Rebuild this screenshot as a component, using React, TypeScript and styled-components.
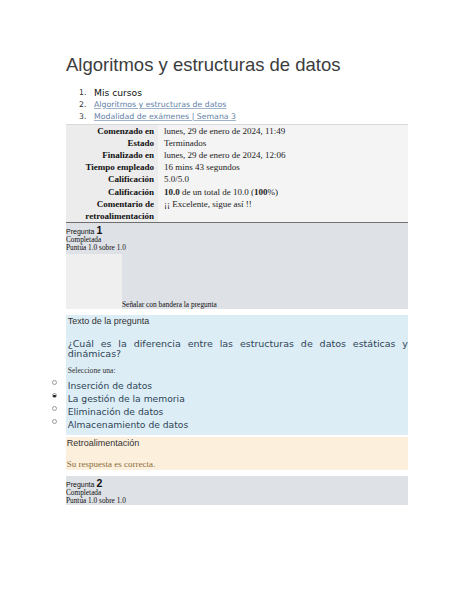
import React from "react";
import styled, { createGlobalStyle } from "styled-components";

const GlobalStyle = createGlobalStyle`
  html, body { margin: 0; padding: 0; background: #ffffff; }
  body { font-family: "Liberation Serif", "Times New Roman", serif; color: #000; }
`;

const Page = styled.div`
  width: 342px;
  margin-left: 66px;
  padding-top: 54px;
  padding-bottom: 40px;
`;

const Title = styled.h1`
  margin: 0;
  font-family: "Liberation Sans", Arial, sans-serif;
  font-weight: normal;
  font-size: 18.5px;
  line-height: 22px;
  color: #3c3c3c;
  white-space: nowrap;
`;

const Crumbs = styled.ol`
  margin: 10.5px 0 0 0;
  padding: 0 0 0 28px;
  list-style: none;
  counter-reset: crumb;
  font-family: "DejaVu Sans", Verdana, sans-serif;
`;

const Crumb = styled.li<{ $link?: boolean }>`
  counter-increment: crumb;
  position: relative;
  height: 12.4px;
  line-height: 12.4px;
  font-size: ${(p) => (p.$link ? "7.8px" : "9.2px")};
  color: ${(p) => (p.$link ? "#5f7fa6" : "#111")};
  text-decoration: ${(p) => (p.$link ? "underline" : "none")};
  text-decoration-color: #9fb2c8;
  white-space: nowrap;
  &::before {
    content: counter(crumb) ".";
    position: absolute;
    left: -15px;
    font-size: 7.8px;
    color: #333;
    text-decoration: none;
    display: inline-block;
  }
`;

const Summary = styled.div`
  display: grid;
  grid-template-columns: 92px 1fr;
  border-top: 1px solid #d9d9d9;
  font-size: 9px;
  line-height: 12.2px;
`;

const Label = styled.div`
  background: #ececec;
  text-align: right;
  padding-right: 4px;
  font-weight: bold;
  color: #111;
`;

const Value = styled.div`
  background: #f4f4f4;
  padding-left: 6px;
  color: #222;
  white-space: nowrap;
`;

const QuestionHead = styled.div<{ $tall?: boolean }>`
  display: flex;
  flex-direction: column;
  background: #dee1e5;
  border-top: ${(p) => (p.$tall ? "1px solid #6f6f6f" : "none")};
  margin-top: ${(p) => (p.$tall ? "0" : "6px")};
  height: ${(p) => (p.$tall ? "87px" : "29px")};
  box-sizing: border-box;
`;

const Info = styled.div`
  padding-top: 3px;
  height: 29px;
  box-sizing: border-box;
  color: #111;
  white-space: nowrap;
`;

const QNo = styled.div`
  display: flex;
  align-items: baseline;
  gap: 2px;
  font-family: "Liberation Sans", Arial, sans-serif;
  font-size: 7px;
  line-height: 10px;
  height: 10px;
`;

const QNum = styled.b`
  font-size: 10.5px;
  line-height: 9px;
  font-weight: bold;
`;

const InfoLine = styled.div`
  font-size: 7.3px;
  line-height: 8px;
  height: 8px;
`;

const FlagRow = styled.div`
  flex: 1;
  display: grid;
  grid-template-columns: 56px 1fr;
  margin-top: 2px;
`;

const InfoCol = styled.div`
  background: #efefef;
`;

const Flag = styled.div`
  align-self: end;
  font-size: 7.4px;
  line-height: 8px;
  color: #111;
  white-space: nowrap;
`;

const Formulation = styled.div`
  margin-top: 6px;
  background: #dcedf5;
  padding: 2px 0 4.5px 1.7px;
`;

const SectionLabel = styled.div`
  font-family: "Liberation Sans", Arial, sans-serif;
  font-size: 9px;
  line-height: 9.5px;
  color: #333;
`;

const QText = styled.p`
  margin: 12.5px 0 0 0;
  font-family: "DejaVu Sans", Verdana, sans-serif;
  font-size: 9.5px;
  line-height: 9.5px;
  color: #2f4457;
  text-align: justify;
`;

const Prompt = styled.div`
  margin-top: 8px;
  font-size: 7.6px;
  line-height: 9px;
  color: #333;
`;

const Options = styled.div`
  margin-top: 3.5px;
  display: flex;
  flex-direction: column;
`;

const Option = styled.label`
  display: flex;
  align-items: flex-start;
  margin-left: -15.7px;
  gap: 10.7px;
  height: 13px;
  font-family: "DejaVu Sans", Verdana, sans-serif;
  font-size: 9.2px;
  line-height: 13px;
  color: #2f4457;
  white-space: nowrap;
`;

const Radio = styled.span<{ $checked?: boolean }>`
  flex: none;
  width: 5px;
  height: 5px;
  margin-top: 1.5px;
  border-radius: 50%;
  border: 0.8px solid #9a9a9a;
  background: #fff;
  box-sizing: border-box;
  display: flex;
  align-items: center;
  justify-content: center;
  &::after {
    content: "";
    width: 2.4px;
    height: 2.4px;
    border-radius: 50%;
    background: ${(p) => (p.$checked ? "#111" : "transparent")};
  }
`;

const Feedback = styled.div`
  margin-top: 2px;
  background: #fcefdc;
  padding: 2px 0 0.7px 0.7px;
`;

const FeedbackText = styled.div`
  margin-top: 10.7px;
  font-size: 9px;
  line-height: 10px;
  color: #8a6d3b;
`;

const summary: [React.ReactNode, React.ReactNode][] = [
  ["Comenzado en", "lunes, 29 de enero de 2024, 11:49"],
  ["Estado", "Terminados"],
  ["Finalizado en", "lunes, 29 de enero de 2024, 12:06"],
  ["Tiempo empleado", "16 mins 43 segundos"],
  ["Calificación", "5.0/5.0"],
  [
    "Calificación",
    <>
      <b>10.0</b> de un total de 10.0 (<b>100</b>%)
    </>,
  ],
  [
    <>
      Comentario de
      <br />
      retroalimentación
    </>,
    "¡¡ Excelente, sigue así !!",
  ],
];

const options = [
  { text: "Inserción de datos", checked: false },
  { text: "La gestión de la memoria", checked: true },
  { text: "Eliminación de datos", checked: false },
  { text: "Almacenamiento de datos", checked: false },
];

function QuestionInfo({ n }: { n: number }) {
  return (
    <Info>
      <QNo>
        Pregunta<QNum>{n}</QNum>
      </QNo>
      <InfoLine>Completada</InfoLine>
      <InfoLine>Puntúa 1.0 sobre 1.0</InfoLine>
    </Info>
  );
}

export default function App() {
  return (
    <>
      <GlobalStyle />
      <Page>
        <Title>Algoritmos y estructuras de datos</Title>
        <Crumbs>
          <Crumb>Mis cursos</Crumb>
          <Crumb $link>Algoritmos y estructuras de datos</Crumb>
          <Crumb $link>Modalidad de exámenes | Semana 3</Crumb>
        </Crumbs>
        <Summary>
          {summary.map(([l, v], i) => (
            <React.Fragment key={i}>
              <Label>{l}</Label>
              <Value>{v}</Value>
            </React.Fragment>
          ))}
        </Summary>
        <QuestionHead $tall>
          <QuestionInfo n={1} />
          <FlagRow>
            <InfoCol />
            <Flag>Señalar con bandera la pregunta</Flag>
          </FlagRow>
        </QuestionHead>
        <Formulation>
          <SectionLabel>Texto de la pregunta</SectionLabel>
          <QText>
            ¿Cuál es la diferencia entre las estructuras de datos estáticas y
            dinámicas?
          </QText>
          <Prompt>Seleccione una:</Prompt>
          <Options>
            {options.map((o) => (
              <Option key={o.text}>
                <Radio $checked={o.checked} />
                {o.text}
              </Option>
            ))}
          </Options>
        </Formulation>
        <Feedback>
          <SectionLabel>Retroalimentación</SectionLabel>
          <FeedbackText>Su respuesta es correcta.</FeedbackText>
        </Feedback>
        <QuestionHead>
          <QuestionInfo n={2} />
        </QuestionHead>
      </Page>
    </>
  );
}
